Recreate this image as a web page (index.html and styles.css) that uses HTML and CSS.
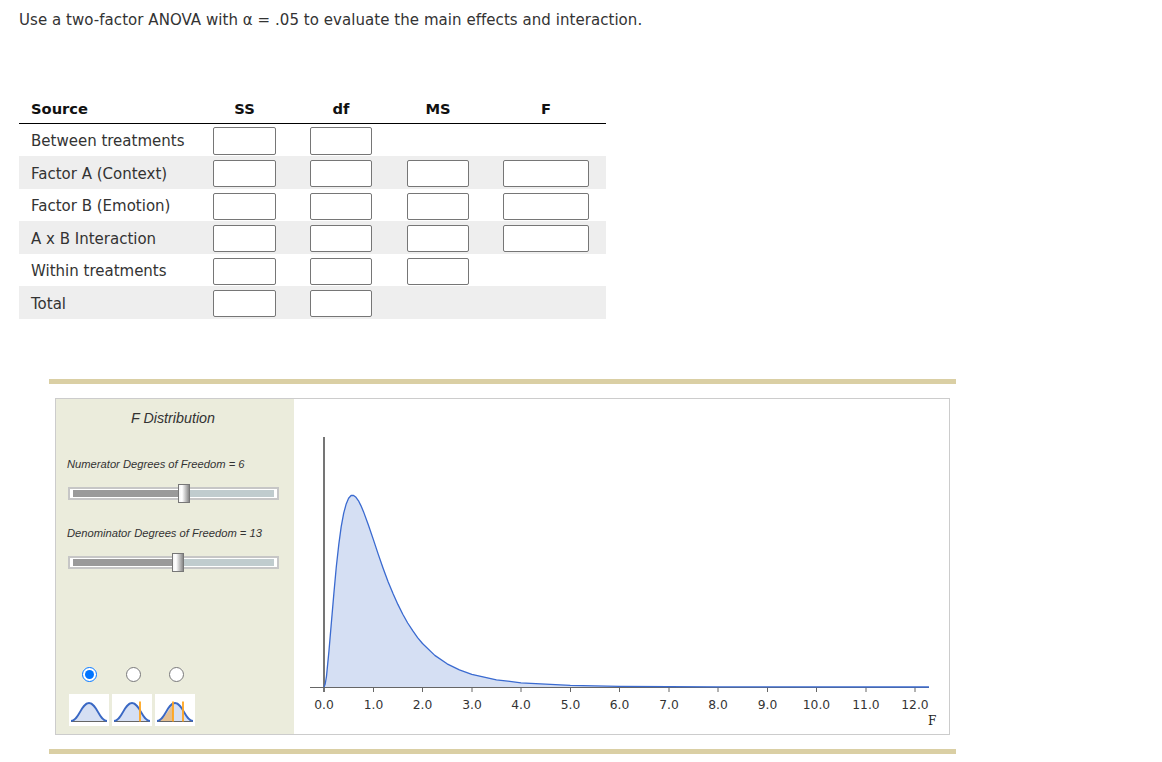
FILE: index.html
```html
<!DOCTYPE html>
<html lang="en">
<head>
<meta charset="utf-8">
<title>Two-factor ANOVA</title>
<link rel="stylesheet" href="styles.css">
</head>
<body>
<p class="prompt">Use a two-factor ANOVA with α = .05 to evaluate the main effects and interaction.</p>

<section class="anova">
  <div class="row head"><div class="label">Source</div><div>SS</div><div>df</div><div>MS</div><div>F</div></div>
  <div class="row first"><div class="label">Between treatments</div><input type="text"><input type="text"></div>
  <div class="row alt"><div class="label">Factor A (Context)</div><input type="text"><input type="text"><input type="text"><input type="text"></div>
  <div class="row"><div class="label">Factor B (Emotion)</div><input type="text"><input type="text"><input type="text"><input type="text"></div>
  <div class="row alt"><div class="label">A x B Interaction</div><input type="text"><input type="text"><input type="text"><input type="text"></div>
  <div class="row"><div class="label">Within treatments</div><input type="text"><input type="text"><input type="text"></div>
  <div class="row alt"><div class="label">Total</div><input type="text"><input type="text"></div>
</section>

<div class="rule rule-top"></div>

<section class="panel">
  <aside class="side">
    <h2 class="side-title">F Distribution</h2>
    <div class="slider-label num">Numerator Degrees of Freedom = 6</div>
    <div class="slider"><div class="fill" style="width:111px"></div><div class="rest"></div><div class="thumb" style="left:108px"></div></div>
    <div class="slider-label den">Denominator Degrees of Freedom = 13</div>
    <div class="slider"><div class="fill" style="width:105px"></div><div class="rest"></div><div class="thumb" style="left:102px"></div></div>
    <div class="radios">
      <input type="radio" name="tail" checked>
      <input type="radio" name="tail">
      <input type="radio" name="tail">
    </div>
    <div class="thumbs">
      <svg class="mini" viewBox="0 0 40 32"><path class="mini-fill" d="M3 27C10 27 12 9 20 9S30 27 37 27Z"/><path class="mini-base" d="M2 27.500H38"/><path class="mini-line" d="M2 27C10 27 12 9 20 9S30 27 38 27"/></svg>
      <svg class="mini" viewBox="0 0 40 32"><path class="mini-fill" d="M3 27C10 27 12 9 20 9S30 27 37 27Z"/><path class="mini-base" d="M2 27.500H38"/><path class="mini-line" d="M2 27C10 27 12 9 20 9S30 27 38 27"/><path class="mini-cut" d="M28 7.500V27.500"/></svg>
      <svg class="mini" viewBox="0 0 40 32"><path class="mini-fill" d="M3 27C10 27 12 9 20 9S30 27 37 27Z"/><path class="mini-tail" d="M2 27C8 27 11 20 18 10V27Z"/><path class="mini-base" d="M2 27.500H38"/><path class="mini-line" d="M2 27C10 27 12 9 20 9S30 27 38 27"/><path class="mini-cut" d="M18 7.500V27.500M28 7.500V27.500"/></svg>
    </div>
  </aside>
  <svg class="chart" viewBox="294 399 655 335">
    <path class="area" d="M324 687L325.200 684 326.500 676.100 328.900 651.600 331.400 622.300 333.900 593.100 336.300 566.700 338.800 544.400 341.200 526.600 343.700 513.200 346.200 503.900 348.600 498.200 351.100 495.500 353.600 495.400 356 497.300 358.500 500.800 360.900 505.600 363.400 511.400 368.300 524.800 373.300 539.400 378.200 554.100 383.100 568.200 388 581.400 393 593.600 397.900 604.400 402.800 614.300 407.700 623 412.700 630.700 417.600 637.600 422.500 643.500 434.800 655.400 447.100 663.800 459.400 669.900 471.800 674.300 496.400 679.800 521 682.800 570.300 685.400 619.500 686.400 668.800 686.700 718 686.900 929 687Z"/>
    <path class="axis-y" d="M324 437V692"/>
    <path class="axis-x" d="M310 687.500H929"/>
    <path class="tick" d="M373.500 688V692M422.500 688V692M472 688V692M521 688V692M570.500 688V692M619.500 688V692M669 688V692M718 688V692M767.500 688V692M816.500 688V692M866 688V692M915 688V692"/>
    <path class="curve" d="M324 687L325.200 684 326.500 676.100 328.900 651.600 331.400 622.300 333.900 593.100 336.300 566.700 338.800 544.400 341.200 526.600 343.700 513.200 346.200 503.900 348.600 498.200 351.100 495.500 353.600 495.400 356 497.300 358.500 500.800 360.900 505.600 363.400 511.400 368.300 524.800 373.300 539.400 378.200 554.100 383.100 568.200 388 581.400 393 593.600 397.900 604.400 402.800 614.300 407.700 623 412.700 630.700 417.600 637.600 422.500 643.500 434.800 655.400 447.100 663.800 459.400 669.900 471.800 674.300 496.400 679.800 521 682.800 570.300 685.400 619.500 686.400 668.800 686.700 718 686.900 929 687"/>
    <g class="ticks-text">
      <text x="324" y="709">0.0</text><text x="373.500" y="709">1.0</text><text x="422.500" y="709">2.0</text><text x="472" y="709">3.0</text><text x="521" y="709">4.0</text><text x="570.500" y="709">5.0</text><text x="619.500" y="709">6.0</text><text x="669" y="709">7.0</text><text x="718" y="709">8.0</text><text x="767.500" y="709">9.0</text><text x="816.500" y="709">10.0</text><text x="866" y="709">11.0</text><text x="915" y="709">12.0</text>
    </g>
    <text class="f-label" x="928" y="725">F</text>
  </svg>
</section>

<div class="rule rule-bottom"></div>
</body>
</html>
```

FILE: styles.css
```css
html, body { margin: 0; padding: 0; background: #fff; }
body { font-family: "DejaVu Sans", Verdana, sans-serif; color: #333; height: 762px; overflow: hidden; }

.prompt { margin: 0; padding: 12px 0 0 19px; font-size: 15px; line-height: 17px; letter-spacing: 0.05px; }

.anova { width: 587px; margin: 70.750px 0 0 19px; font-size: 15px; }
.row { display: grid; grid-template-columns: 194px 97px 97px 96px 103px; align-items: center; height: 32.500px; }
.row > :nth-child(2) { width: 63px; }
.row > :nth-child(3), .row > :nth-child(4) { width: 62px; }
.row > :nth-child(5) { width: 86px; }
.row input { box-sizing: border-box; height: 27px; margin: 2px 0 0; padding: 0; border: 1px solid #767676; border-radius: 2px; background: #fff; }
.row.first input { height: 28px; }
.label { padding: 2px 0 0 12px; white-space: nowrap; }
.alt { background: #eee; }
.head { box-sizing: content-box; height: 15px; padding-bottom: 8px; border-bottom: 1px solid #000; font-weight: 700; color: #111; font-size: 14.700px; text-align: center; }
.head .label { padding-top: 0; text-align: left; }

.rule { width: 907px; height: 5px; margin-left: 49px; background: #dacfa4; }
.rule-top { margin-top: 60.250px; }
.rule-bottom { margin-top: 14px; }

.panel { box-sizing: border-box; display: flex; width: 895px; height: 337px; margin: 14px 0 0 55px; border: 1px solid #ccc; }
.side { box-sizing: border-box; width: 238px; padding: 12px 0 0 11px; background: #ebecdc; color: #333; font-family: "Liberation Sans", Arial, sans-serif; font-style: italic; }
.side-title { margin: 0; padding-right: 15px; font-size: 14.300px; line-height: 15px; font-weight: 400; text-align: center; }
.slider-label { font-size: 11.200px; line-height: 12px; white-space: nowrap; }
.num { margin-top: 32px; }
.den { margin-top: 27px; }
.slider { position: relative; box-sizing: border-box; display: flex; width: 211px; height: 13px; margin: 17px 0 0 1px; padding: 1px 3px; border: 2px solid #c6c6c6; background: #fff; }
.fill { height: 100%; background: #9a9a9a; }
.rest { flex: 1; height: 100%; background: #c0ccce; }
.thumb { position: absolute; top: -5px; box-sizing: border-box; width: 12px; height: 19px; border: 1px solid #777; background: linear-gradient(to right, #f4f4f4, #fff 30%, #888); }

.radios { display: flex; margin: 97.500px 0 0 15px; gap: 28.500px; }
.radios input { width: 15px; height: 15px; margin: 0; }
.thumbs { display: flex; gap: 3px; margin: 12px 0 0 2px; }
.mini { display: block; width: 40px; height: 32px; background: #fff; }
.mini-fill { fill: #d5dff3; }
.mini-tail { fill: #e3bf92; }
.mini-base { fill: none; stroke: #666; stroke-width: 1; }
.mini-line { fill: none; stroke: #3a68c4; stroke-width: 1.800; }
.mini-cut { fill: none; stroke: #ffa51e; stroke-width: 1.800; }

.chart { display: block; flex: 1; height: 335px; }
.area { fill: #d5dff3; }
.curve { fill: none; stroke: #3a6ad0; stroke-width: 1.300; stroke-linejoin: round; }
.axis-y { fill: none; stroke: #666; stroke-width: 1.800; }
.axis-x { fill: none; stroke: #666; stroke-width: 1; }
.tick { fill: none; stroke: #666; stroke-width: 1; }
.ticks-text { font-family: "DejaVu Sans", Verdana, sans-serif; font-size: 12.300px; fill: #333; text-anchor: middle; }
.f-label { font-family: "DejaVu Serif", serif; font-size: 12px; fill: #222; }
```
